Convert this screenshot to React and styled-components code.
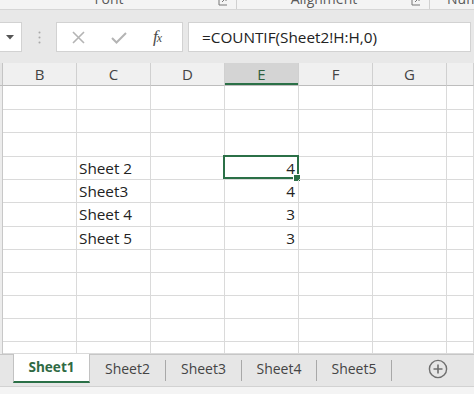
import React from "react";
import styled, { createGlobalStyle } from "styled-components";

const GlobalStyle = createGlobalStyle`
  html, body { margin: 0; padding: 0; background: #fff; }
  body { font-family: "Open Sans", "Liberation Sans", sans-serif; }
`;

const GREEN = "#2b7047";

const Screen = styled.div`
  width: 474px;
  height: 394px;
  overflow: hidden;
  display: flex;
  flex-direction: column;
  background: #fff;
`;

/* ribbon group labels, cut off at the top */
const Ribbon = styled.div`
  height: 10px;
  box-sizing: border-box;
  border-bottom: 1px solid #d6d6d6;
  background: #f4f4f4;
  display: flex;
  overflow: hidden;
`;

const RibbonGroup = styled.div`
  width: ${(p) => p.$width}px;
  flex-shrink: 0;
  display: flex;
  align-items: flex-start;
  box-sizing: border-box;
  border-right: ${(p) => (p.$sep ? "1px solid #d0d0d0" : "none")};
  padding-left: ${(p) => p.$pad || 0}px;
`;

const RibbonLabel = styled.span`
  flex: ${(p) => (p.$grow ? 1 : "none")};
  text-align: ${(p) => (p.$grow ? "center" : "left")};
  font-size: 14px;
  line-height: 14px;
  margin-top: -8px;
  color: #5a5a5a;
  white-space: nowrap;
`;

const Launcher = styled.svg`
  width: 10px;
  height: 10px;
  margin: -4px 8px 0 0;
  flex-shrink: 0;
`;

/* formula bar */
const FormulaBar = styled.div`
  height: 53px;
  box-sizing: border-box;
  background: #e8e8e8;
  padding: 12px 3px 11px 0;
  display: flex;
  align-items: stretch;
`;

const Box = styled.div`
  background: #fff;
  border: 1px solid #d2d2d2;
  box-sizing: border-box;
  display: flex;
  align-items: center;
`;

const NameBox = styled(Box)`
  width: 23px;
  margin-left: -1px;
  border-left: none;
  justify-content: center;
`;

const Grip = styled.div`
  width: 34px;
  display: flex;
  align-items: center;
  justify-content: center;
`;

const FxBox = styled(Box)`
  width: 127px;
  gap: 26px;
  padding-left: 15px;
  margin-right: 5px;
`;

const Fx = styled.span`
  font-family: "Liberation Serif", "DejaVu Serif", serif;
  font-style: italic;
  font-size: 17px;
  color: #4a4a4a;
  letter-spacing: -1px;
  & small {
    font-size: 12px;
  }
`;

const FormulaBox = styled(Box)`
  flex: 1;
  padding-left: 13px;
  font-size: 15.3px;
  color: #222;
  padding-bottom: 1px;
`;

/* sheet grid */
const Grid = styled.div`
  display: grid;
  grid-template-columns: 3px repeat(6, 74px) 1fr;
  grid-template-rows: ${(p) => p.$rows.map((h) => `${h}px`).join(" ")};
  flex-shrink: 0;
`;

const HeadCell = styled.div`
  box-sizing: border-box;
  background: ${(p) => (p.$active ? "#d4d4d4" : "#f0f0f0")};
  border-right: 1px solid #d0d0d0;
  border-bottom: 1px solid #bdbdbd;
  box-shadow: ${(p) => (p.$active ? `inset 0 -2px 0 ${GREEN}` : "none")};
  color: ${(p) => (p.$active ? "#2f5e3e" : "#444")};
  font-size: 15px;
  display: flex;
  align-items: center;
  justify-content: center;
  padding-bottom: 1px;
`;

const Corner = styled(HeadCell)`
  background: #e4e4e4;
  border-right: 1px solid #c4c4c4;
`;

const RowStub = styled.div`
  background: #ececec;
  border-right: 1px solid #c8c8c8;
  box-sizing: border-box;
`;

const Cell = styled.div`
  position: relative;
  box-sizing: border-box;
  border-right: 1px solid #dadada;
  border-bottom: 1px solid #dadada;
  font-size: 15.3px;
  line-height: 23px;
  color: #222;
  white-space: nowrap;
  text-align: ${(p) => (p.$right ? "right" : "left")};
  padding: ${(p) => (p.$right ? "0 3px 0 0" : "0 0 0 2px")};
`;

const Selection = styled.div`
  position: absolute;
  left: -2px;
  top: -2px;
  right: -1px;
  bottom: 0;
  border: 2px solid ${GREEN};
  pointer-events: none;
`;

const FillHandle = styled.div`
  position: absolute;
  right: -3px;
  bottom: -4px;
  width: 6px;
  height: 6px;
  background: ${GREEN};
  outline: 1px solid #fff;
`;

/* sheet tabs */
const TabBar = styled.div`
  height: 33px;
  box-sizing: border-box;
  background: #e6e6e6;
  border-top: 1px solid #c6c6c6;
  border-bottom: 1px solid #d2d2d2;
  display: flex;
  align-items: stretch;
  padding: 0 0 3px 13px;
`;

const Tab = styled.div`
  width: ${(p) => p.$width}px;
  box-sizing: border-box;
  display: flex;
  align-items: center;
  justify-content: center;
  font-size: 14px;
  padding-bottom: 2px;
  color: #444;
  position: relative;
`;

const ActiveTab = styled(Tab)`
  background: #fff;
  margin-top: -1px;
  border-left: 1px solid #c2c2c2;
  border-right: 1px solid #c2c2c2;
  border-bottom: 2px solid ${GREEN};
  color: #2f6a43;
  font-weight: 700;
  font-size: 13.6px;
`;

const TabSep = styled.div`
  width: 1px;
  margin: 5px 0 2px;
  background: #a8a8a8;
`;

const AddSheet = styled.div`
  flex: 1;
  display: flex;
  align-items: center;
  justify-content: center;
  padding: 0 0 1px 9px;
`;

const Footer = styled.div`
  flex: 1;
  background: #f4f4f4;
`;

const columns = ["B", "C", "D", "E", "F", "G", ""];
const rowHeights = [23, 24, 23, 24, 23, 23, 24, 23, 23, 23, 23, 23, 12];

const data = [
  {},
  {},
  {},
  { C: "Sheet 2", E: "4", selected: true },
  { C: "Sheet3", E: "4" },
  { C: "Sheet 4", E: "3" },
  { C: "Sheet 5", E: "3" },
  {},
  {},
  {},
  {},
  {},
];

const tabs = ["Sheet2", "Sheet3", "Sheet4", "Sheet5"];
const tabWidths = [75, 75, 74, 74];

function LauncherIcon() {
  return (
    <Launcher viewBox="0 0 10 10">
      <path d="M1 1v8h8" fill="none" stroke="#777" strokeWidth="1" />
      <path d="M4 6l4-4M5 2h3v3" fill="none" stroke="#777" strokeWidth="1" />
    </Launcher>
  );
}

function SheetGrid() {
  return (
    <Grid $rows={rowHeights}>
      <Corner />
      {columns.map((c) => (
        <HeadCell key={c || "rest"} $active={c === "E"}>
          {c}
        </HeadCell>
      ))}
      {data.map((row, i) => (
        <React.Fragment key={i}>
          <RowStub />
          {columns.map((c) => {
            const right = c === "E";
            return (
              <Cell key={c || "rest"} $right={right}>
                {row[c]}
                {right && row.selected && (
                  <Selection>
                    <FillHandle />
                  </Selection>
                )}
              </Cell>
            );
          })}
        </React.Fragment>
      ))}
    </Grid>
  );
}

export default function App() {
  return (
    <Screen>
      <GlobalStyle />
      <Ribbon>
        <RibbonGroup $width={237} $sep>
          <RibbonLabel $grow>Font</RibbonLabel>
          <LauncherIcon />
        </RibbonGroup>
        <RibbonGroup $width={193} $sep>
          <RibbonLabel $grow>Alignment</RibbonLabel>
          <LauncherIcon />
        </RibbonGroup>
        <RibbonGroup $width={60} $pad={17}>
          <RibbonLabel>Number</RibbonLabel>
        </RibbonGroup>
      </Ribbon>

      <FormulaBar>
        <NameBox>
          <svg width="8" height="5" viewBox="0 0 8 5">
            <path d="M0 0h8L4 4.5z" fill="#555" />
          </svg>
        </NameBox>
        <Grip>
          <svg width="3" height="13" viewBox="0 0 3 13">
            <circle cx="1.5" cy="1.5" r="1" fill="#a8a8a8" />
            <circle cx="1.5" cy="6.5" r="1" fill="#a8a8a8" />
            <circle cx="1.5" cy="11.5" r="1" fill="#a8a8a8" />
          </svg>
        </Grip>
        <FxBox>
          <svg width="13" height="13" viewBox="0 0 13 13">
            <path d="M1 1l11 11M12 1L1 12" stroke="#b4b4b4" strokeWidth="1.6" />
          </svg>
          <svg width="16" height="13" viewBox="0 0 16 13">
            <path d="M1 7l4.5 4.5L15 2" fill="none" stroke="#b4b4b4" strokeWidth="2" />
          </svg>
          <Fx>
            f<small>x</small>
          </Fx>
        </FxBox>
        <FormulaBox>=COUNTIF(Sheet2!H:H,0)</FormulaBox>
      </FormulaBar>

      <SheetGrid />

      <TabBar>
        <ActiveTab $width={77}>Sheet1</ActiveTab>
        {tabs.map((t, i) => (
          <React.Fragment key={t}>
            <Tab $width={tabWidths[i]}>{t}</Tab>
            <TabSep />
          </React.Fragment>
        ))}
        <AddSheet>
          <svg width="20" height="20" viewBox="0 0 20 20">
            <circle cx="10" cy="10" r="8.6" fill="none" stroke="#6f6f6f" strokeWidth="1.4" />
            <path d="M10 5.5v9M5.5 10h9" stroke="#6f6f6f" strokeWidth="1.6" />
          </svg>
        </AddSheet>
      </TabBar>
      <Footer />
    </Screen>
  );
}
